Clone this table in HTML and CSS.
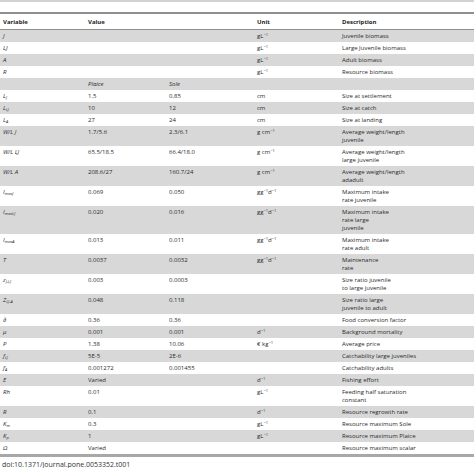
FILE: index.html
```html
<!DOCTYPE html>
<html>
<head>
<meta charset="utf-8">
<link rel="stylesheet" href="styles.css">
</head>
<body>
<div class="topband"></div>
<table class="params">
<colgroup><col class="c1"><col class="c2"><col class="c3"><col class="c4"><col class="c5"></colgroup>
<thead>
<tr><th>Variable</th><th colspan="2">Value</th><th>Unit</th><th>Description</th></tr>
</thead>
<tbody>
<tr><td><i>J</i></td><td></td><td></td><td>gL<sup>−1</sup></td><td>Juvenile biomass</td></tr>
<tr><td><i>LJ</i></td><td></td><td></td><td>gL<sup>−1</sup></td><td>Large Juvenile biomass</td></tr>
<tr><td><i>A</i></td><td></td><td></td><td>gL<sup>−1</sup></td><td>Adult biomass</td></tr>
<tr><td><i>R</i></td><td></td><td></td><td>gL<sup>−1</sup></td><td>Resource biomass</td></tr>
<tr><td></td><td><i>Plaice</i></td><td><i>Sole</i></td><td></td><td></td></tr>
<tr><td><i>L<sub>J</sub></i></td><td>1.5</td><td>0.85</td><td>cm</td><td>Size at settlement</td></tr>
<tr><td><i>L<sub>LJ</sub></i></td><td>10</td><td>12</td><td>cm</td><td>Size at catch</td></tr>
<tr><td><i>L<sub>A</sub></i></td><td>27</td><td>24</td><td>cm</td><td>Size at landing</td></tr>
<tr><td><i>W/L J</i></td><td>1.7/5.6</td><td>2.3/6.1</td><td>g cm<sup>−1</sup></td><td>Average weight/length<br>juvenile</td></tr>
<tr><td><i>W/L LJ</i></td><td>65.5/18.5</td><td>66.4/18.0</td><td>g cm<sup>−1</sup></td><td>Average weight/length<br>large juvenile</td></tr>
<tr><td><i>W/L A</i></td><td>208.6/27</td><td>160.7/24</td><td>g cm<sup>−1</sup></td><td>Average weight/length<br>adadult</td></tr>
<tr><td><i>I<sub>maxJ</sub></i></td><td>0.069</td><td>0.050</td><td>gg<sup>−1</sup>d<sup>−1</sup></td><td>Maximum intake<br>rate juvenile</td></tr>
<tr><td><i>I<sub>maxLJ</sub></i></td><td>0.020</td><td>0.016</td><td>gg<sup>−1</sup>d<sup>−1</sup></td><td>Maximum intake<br>rate large<br>juvenile</td></tr>
<tr><td><i>I<sub>maxA</sub></i></td><td>0.013</td><td>0.011</td><td>gg<sup>−1</sup>d<sup>−1</sup></td><td>Maximum intake<br>rate adult</td></tr>
<tr><td><i>T</i></td><td>0.0037</td><td>0.0032</td><td>gg<sup>−1</sup>d<sup>−1</sup></td><td>Maintenance<br>rate</td></tr>
<tr><td><i>z<sub>J-LJ</sub></i></td><td>0.003</td><td>0.0003</td><td></td><td>Size ratio juvenile<br>to large juvenile</td></tr>
<tr><td><i>Z<sub>LJ-A</sub></i></td><td>0.048</td><td>0.118</td><td></td><td>Size ratio large<br>juvenile to adult</td></tr>
<tr><td><i>∂</i></td><td>0.36</td><td>0.36</td><td></td><td>Food conversion factor</td></tr>
<tr><td><i>μ</i></td><td>0.001</td><td>0.001</td><td>d<sup>−1</sup></td><td>Background mortality</td></tr>
<tr><td><i>P</i></td><td>1.38</td><td>10.06</td><td>€ kg<sup>−1</sup></td><td>Average price</td></tr>
<tr><td><i>f<sub>LJ</sub></i></td><td>5E-5</td><td>2E-6</td><td></td><td>Catchability large juveniles</td></tr>
<tr><td><i>f<sub>A</sub></i></td><td>0.001272</td><td>0.001455</td><td></td><td>Catchability adults</td></tr>
<tr><td><i>E</i></td><td>Varied</td><td></td><td>d<sup>−1</sup></td><td>Fishing effort</td></tr>
<tr><td><i>Rh</i></td><td>0.01</td><td></td><td>gL<sup>−1</sup></td><td>Feeding half saturation<br>constant</td></tr>
<tr><td><i>R</i></td><td>0.1</td><td></td><td>d<sup>−1</sup></td><td>Resource regrowth rate</td></tr>
<tr><td><i>K<sub>m</sub></i></td><td>0.3</td><td></td><td>gL<sup>−1</sup></td><td>Resource maximum Sole</td></tr>
<tr><td><i>K<sub>p</sub></i></td><td>1</td><td></td><td>gL<sup>−1</sup></td><td>Resource maximum Plaice</td></tr>
<tr><td><i>Ω</i></td><td>Varied</td><td></td><td></td><td>Resource maximum scalar</td></tr>
</tbody>
</table>
<div class="doi">doi:10.1371/journal.pone.0053352.t001</div>
</body>
</html>
```

FILE: styles.css
```css
html, body {
  margin: 0;
  padding: 0;
  background: #ffffff;
}
body {
  font-family: "Open Sans", "DejaVu Sans", sans-serif;
  font-size: 6px;
  color: #2a2a2a;
  width: 474px;
}
.topband {
  height: 2px;
  background: #d2d2d2;
  margin-bottom: 10px;
}
.params {
  width: 474px;
  border-collapse: collapse;
  table-layout: fixed;
  border-top: 2px solid #8f8f8f;
  border-bottom: 3px solid #a8a8a8;
}
.c1 { width: 85px; }
.c2 { width: 81px; }
.c3 { width: 88px; }
.c4 { width: 85px; }
.params th {
  text-align: left;
  font-weight: bold;
  color: #1e1e1e;
  height: 15px;
  padding: 0 0 0 3px;
  line-height: 8px;
  vertical-align: middle;
  border-bottom: 1px solid #8f8f8f;
}
.params td {
  padding: 2px 0 2px 3px;
  line-height: 8px;
  vertical-align: top;
  white-space: nowrap;
}
.params tbody tr:nth-child(odd) td {
  background: #d8d8d8;
}
sup, sub {
  font-size: 4px;
  line-height: 0;
}
sup { vertical-align: 2px; }
sub { vertical-align: -1px; }
.doi {
  margin-top: 4px;
  padding-left: 2px;
  font-size: 7px;
  line-height: 8px;
  color: #333;
}
```
